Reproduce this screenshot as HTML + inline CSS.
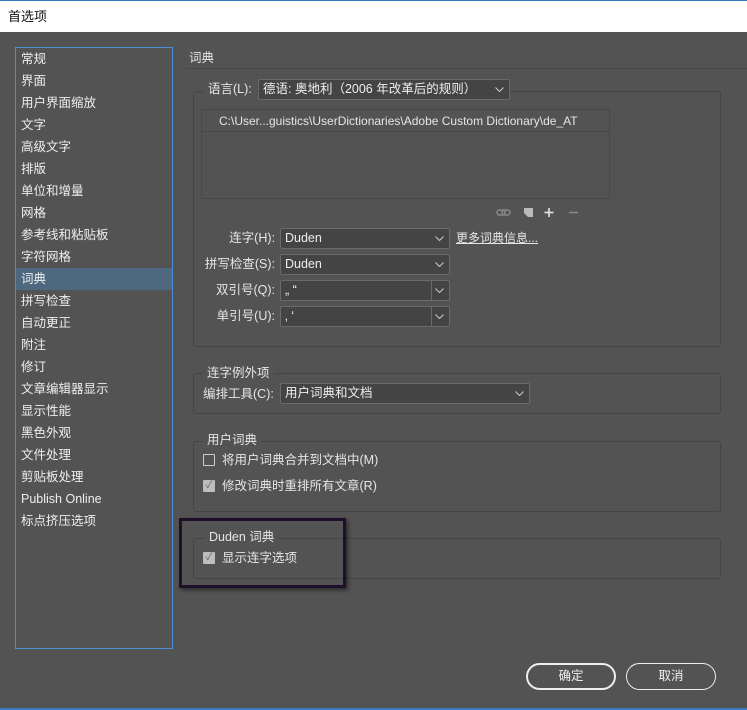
<!DOCTYPE html>
<html><head><meta charset="utf-8"><style>
*{margin:0;padding:0;box-sizing:border-box}
body{width:747px;height:710px;background:#535353;font-family:"Liberation Sans","Noto Sans CJK SC",sans-serif;font-size:12.5px;color:#e6e6e6;position:relative;overflow:hidden}
.a{position:absolute;line-height:16px}
.title{left:0;top:0;width:747px;height:32px;background:#fff;border-top:1px solid #3a7cc4;color:#111;font-size:13px;padding:8px 0 0 8px}
.list{left:15px;top:47px;width:158px;height:602px;border:1px solid #4a8fd6}
.list div{height:22px;line-height:22px;padding-left:5px;color:#eee}
.list .sel{background:#4e6880}
.grp{border:1px solid #454545;border-radius:3px}
.lg{background:#535353;padding:0 4px;color:#e6e6e6}
.sel2{background:#444;border:1px solid #6a6a6a;border-radius:2px;height:21px;line-height:19px;padding-left:4px;color:#eee}
.chev{position:absolute;right:5px;top:7px;width:9px;height:5px}
.lbl{text-align:right;color:#e6e6e6}
.cb{width:12px;height:12px;border:1px solid #ccc;border-radius:1px}
.cbc{width:12px;height:12px;background:#bdbdbd;border-radius:1px;color:#666;font-size:10px;line-height:12px;text-align:center}
.btn{border:2px solid #eee;border-radius:14px;height:27px;text-align:center;line-height:23px;color:#eee}
</style></head><body>
<div class="a title">首选项</div>
<div class="a list">
<div>常规</div><div>界面</div><div>用户界面缩放</div><div>文字</div><div>高级文字</div><div>排版</div><div>单位和增量</div><div>网格</div><div>参考线和粘贴板</div><div>字符网格</div><div class="sel">词典</div><div>拼写检查</div><div>自动更正</div><div>附注</div><div>修订</div><div>文章编辑器显示</div><div>显示性能</div><div>黑色外观</div><div>文件处理</div><div>剪贴板处理</div><div>Publish Online</div><div>标点挤压选项</div>
</div>
<div class="a" style="left:189px;top:50px">词典</div>
<div class="a" style="left:186px;top:68px;width:561px;height:1px;background:#484848"></div>

<div class="a grp" style="left:193px;top:91px;width:528px;height:256px"></div>
<div class="a lg" style="left:204px;top:81px">语言(L):</div>
<div class="a sel2" style="left:258px;top:79px;width:252px">德语: 奥地利（2006 年改革后的规则）<svg class="chev" viewBox="0 0 9 5"><path d="M.5.5l4 4 4-4" fill="none" stroke="#ccc"/></svg></div>
<div class="a" style="left:201px;top:109px;width:409px;height:90px;border:1px solid #484848"></div>
<div class="a" style="left:201px;top:131px;width:409px;height:1px;background:#484848"></div>
<div class="a" style="left:219px;top:113px;font-size:12px">C:\User...guistics\UserDictionaries\Adobe Custom Dictionary\de_AT</div>
<svg class="a" style="left:495px;top:205px" width="95" height="16">
<rect x="2" y="5" width="8" height="5" rx="2.5" fill="none" stroke="#888" stroke-width="1.5"/><rect x="7" y="5" width="8" height="5" rx="2.5" fill="none" stroke="#888" stroke-width="1.5"/>
<path d="M29 3h9v9h-5l-4-4z" fill="#bbb"/>
<path d="M54 3v9M49.5 7.5h9" stroke="#ddd" stroke-width="1.7"/>
<path d="M74 7.5h9" stroke="#888" stroke-width="1.5"/>
</svg>
<div class="a lbl" style="left:200px;top:230px;width:75px">连字(H):</div>
<div class="a sel2" style="left:280px;top:228px;width:170px">Duden<svg class="chev" viewBox="0 0 9 5"><path d="M.5.5l4 4 4-4" fill="none" stroke="#ccc"/></svg></div>
<div class="a" style="left:456px;top:230px;font-size:12px;text-decoration:underline">更多词典信息...</div>
<div class="a lbl" style="left:200px;top:256px;width:75px">拼写检查(S):</div>
<div class="a sel2" style="left:280px;top:254px;width:170px">Duden<svg class="chev" viewBox="0 0 9 5"><path d="M.5.5l4 4 4-4" fill="none" stroke="#ccc"/></svg></div>
<div class="a lbl" style="left:200px;top:282px;width:75px">双引号(Q):</div>
<div class="a sel2" style="left:280px;top:280px;width:170px">„ “<span style="position:absolute;left:150px;top:0;width:1px;height:19px;background:#6a6a6a"></span><svg class="chev" viewBox="0 0 9 5"><path d="M.5.5l4 4 4-4" fill="none" stroke="#ccc"/></svg></div>
<div class="a lbl" style="left:200px;top:308px;width:75px">单引号(U):</div>
<div class="a sel2" style="left:280px;top:306px;width:170px">‚ ‘<span style="position:absolute;left:150px;top:0;width:1px;height:19px;background:#6a6a6a"></span><svg class="chev" viewBox="0 0 9 5"><path d="M.5.5l4 4 4-4" fill="none" stroke="#ccc"/></svg></div>

<div class="a grp" style="left:193px;top:373px;width:528px;height:41px"></div>
<div class="a lg" style="left:203px;top:365px">连字例外项</div>
<div class="a" style="left:203px;top:386px">编排工具(C):</div>
<div class="a sel2" style="left:280px;top:383px;width:250px">用户词典和文档<svg class="chev" viewBox="0 0 9 5"><path d="M.5.5l4 4 4-4" fill="none" stroke="#ccc"/></svg></div>

<div class="a grp" style="left:193px;top:441px;width:528px;height:71px"></div>
<div class="a lg" style="left:203px;top:432px">用户词典</div>
<div class="a cb" style="left:203px;top:454px"></div>
<div class="a" style="left:222px;top:452px">将用户词典合并到文档中(M)</div>
<div class="a cbc" style="left:203px;top:480px">✓</div>
<div class="a" style="left:222px;top:478px">修改词典时重排所有文章(R)</div>

<div class="a grp" style="left:193px;top:538px;width:528px;height:41px"></div>
<div class="a lg" style="left:205px;top:529px">Duden 词典</div>
<div class="a cbc" style="left:203px;top:552px">✓</div>
<div class="a" style="left:222px;top:550px">显示连字选项</div>
<div class="a" style="left:179px;top:518px;width:167px;height:70px;border:3px solid #200f2a;box-shadow:2px 2px 4px rgba(0,0,0,.5)"></div>

<div class="a btn" style="left:526px;top:663px;width:90px;line-height:23px">确定</div>
<div class="a btn" style="left:626px;top:663px;width:90px;border-width:1px;line-height:25px">取消</div>
<div class="a" style="left:0;top:708px;width:747px;height:2px;background:#3a7cc4"></div>
</body></html>
